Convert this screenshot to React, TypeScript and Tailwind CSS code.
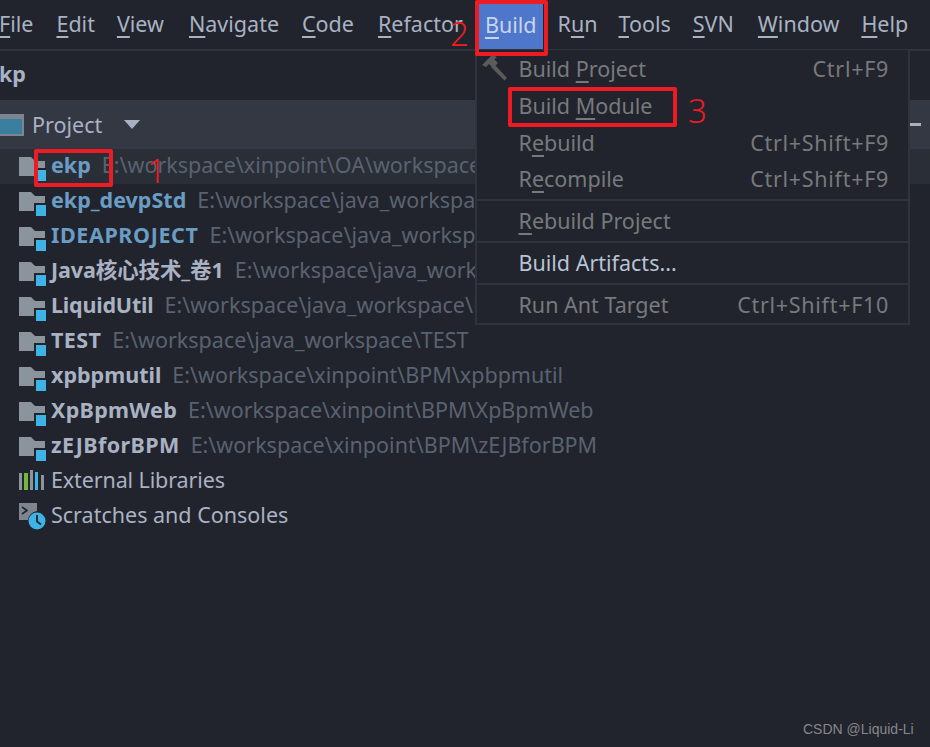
const font = "font-['Noto_Sans','Noto_Sans_CJK_SC',sans-serif]";

const menus = [
    { pre: "", key: "F", post: "ile", nudge: "" },
    { pre: "", key: "E", post: "dit", nudge: "" },
    { pre: "", key: "V", post: "iew", nudge: "-ml-[1px]" },
    { pre: "", key: "N", post: "avigate", nudge: "ml-[2px]" },
    { pre: "", key: "C", post: "ode", nudge: "" },
    { pre: "", key: "R", post: "efactor", nudge: "ml-[1px]" },
    { pre: "", key: "B", post: "uild", nudge: "", active: true },
    { pre: "R", key: "u", post: "n", nudge: "-ml-[2px]" },
    { pre: "", key: "T", post: "ools", nudge: "-ml-[2px]" },
    { pre: "", key: "S", post: "VN", nudge: "-ml-[1px]" },
    { pre: "", key: "W", post: "indow", nudge: "ml-[1px]" },
    { pre: "", key: "H", post: "elp", nudge: "-ml-[1px]" },
];

const modules = [
    { name: "ekp", path: "E:\\workspace\\xinpoint\\OA\\workspace\\ekp", blue: true, selected: true, track: "" },
    { name: "ekp_devpStd", path: "E:\\workspace\\java_workspace\\ekp_devpStd", blue: true, track: "" },
    { name: "IDEAPROJECT", path: "E:\\workspace\\java_workspace\\IDEAPROJECT", blue: true, track: "tracking-[0.6px]" },
    { name: "Java核心技术_卷1", path: "E:\\workspace\\java_workspace\\Java", track: "tracking-[-0.1px]" },
    { name: "LiquidUtil", path: "E:\\workspace\\java_workspace\\LiquidUtil", track: "tracking-[-0.2px]" },
    { name: "TEST", path: "E:\\workspace\\java_workspace\\TEST", track: "tracking-[0.4px]" },
    { name: "xpbpmutil", path: "E:\\workspace\\xinpoint\\BPM\\xpbpmutil", track: "" },
    { name: "XpBpmWeb", path: "E:\\workspace\\xinpoint\\BPM\\XpBpmWeb", track: "tracking-[0.3px]" },
    { name: "zEJBforBPM", path: "E:\\workspace\\xinpoint\\BPM\\zEJBforBPM", track: "tracking-[0.4px]" },
];

function FolderIcon() {
    return (
        <svg width="27" height="25" viewBox="0 0 27 25" className="shrink-0">
            <path d="M0 0h12l4 4h10v15H0z" fill="#8b939c" />
            <rect x="15" y="11" width="12" height="13" fill="#21242c" />
            <rect x="17" y="13" width="10" height="11" fill="#3db3e6" />
        </svg>
    );
}

function LibrariesIcon() {
    return (
        <svg width="27" height="25" viewBox="0 0 27 25" className="shrink-0">
            <rect x="0" y="4" width="3" height="17" fill="#8b939c" />
            <rect x="5" y="4" width="4" height="17" fill="#71b83c" />
            <rect x="11" y="1" width="3" height="20" fill="#8b939c" />
            <rect x="16" y="3" width="3" height="18" fill="#3db3e6" />
            <rect x="22" y="6" width="3" height="15" fill="#8b939c" />
        </svg>
    );
}

function ScratchIcon() {
    return (
        <svg width="27" height="27" viewBox="0 0 27 27" className="shrink-0">
            <path d="M0 0h18v8a10 10 0 0 0-9 9H0z" fill="#7d858e" />
            <path d="M3 4l5 3.5L3 11" fill="none" stroke="#21242c" strokeWidth="1.6" />
            <circle cx="18" cy="18" r="8.5" fill="#3db3e6" />
            <path d="M18 12v6.5l4 3" fill="none" stroke="#21242c" strokeWidth="1.8" />
        </svg>
    );
}

function HammerIcon() {
    return (
        <svg width="27" height="25" viewBox="0 0 27 25" className="absolute left-[5px] top-[6px]">
            <path d="M0 9L9 0h4l2 2-3 1 4 4-5 5-4-4-3 3z" fill="#5b5b5b" />
            <path d="M12 8l13 14-2.5 2.5L9 11z" fill="#5b5b5b" />
        </svg>
    );
}

function MenuRow({ pre, mark, post, shortcut, bright, short }: { pre?: string; mark?: string; post?: string; shortcut?: string; bright?: boolean; short?: boolean }) {
    return (
        <div className={`flex items-center justify-between pl-[41.5px] pr-[19px] ${short ? "h-[36px]" : "h-[37px]"} ${bright ? "text-[#b9c3d4]" : "text-[#777a7c]"}`}>
            <span>{pre}{mark && <span className="underline underline-offset-[4px] decoration-2">{mark}</span>}{post}</span>
            {shortcut && <span className="tracking-[0.7px]">{shortcut}</span>}
        </div>
    );
}

export default function App() {
    return (
        <div className={`relative w-[930px] h-[747px] overflow-hidden bg-[#21242c] text-[21.5px] leading-none ${font}`}>
            {/* Menu bar */}
            <div className="h-[51px] flex items-center gap-[23px] border-b-2 border-[#2f333c] text-[#a9b2c3] pb-[2px] -ml-[1px]">
                {menus.map((m) => (
                    <span key={m.key + m.post} className={m.active ? "self-start mt-[4px] h-[45px] pb-[3px] flex items-center -ml-[7px] -mr-[6px] px-[6px] bg-[#4e77cb] text-[#c9d4ea]" : m.nudge}>
                        <span>{m.pre}<span className="underline underline-offset-[4px] decoration-2">{m.key}</span>{m.post}</span>
                    </span>
                ))}
            </div>

            {/* Breadcrumb */}
            <div className="h-[49px] flex items-center -ml-[1px] pb-[3px] font-bold text-[#a9b2c3]">kp</div>

            {/* Tool window header */}
            <div className="h-[49px] flex items-center justify-between bg-[#343843] text-[#a9b2c3] pr-[9px]">
                <div className="flex items-center">
                    <svg width="24" height="22" viewBox="0 0 24 22" className="shrink-0">
                        <rect x="-2" y="1" width="25" height="20" fill="#3a7f9f" stroke="#7d858e" strokeWidth="2" />
                        <rect x="0" y="2" width="22" height="3" fill="#7d858e" />
                    </svg>
                    <span className="ml-[8px]">Project</span>
                    <svg width="16" height="9" viewBox="0 0 16 9" className="ml-[22px]">
                        <path d="M0 0h16L8 9z" fill="#a9b2c3" />
                    </svg>
                </div>
                <div className="w-[11px] h-[3px] bg-[#a9b2c3]" />
            </div>

            {/* Project tree */}
            <div>
                {modules.map((m) => (
                    <div key={m.name} className={`h-[35px] flex items-center pl-[19px] pb-[3px] gap-[5px] whitespace-nowrap ${m.selected ? "bg-[#2a2e37]" : ""}`}>
                        <div className="pt-[8px]"><FolderIcon /></div>
                        <span className={`font-bold ${m.track} ${m.blue ? "text-[#6a9cc4]" : "text-[#a9b2c3]"}`}>{m.name}</span>
                        <span className="ml-[6px] text-[#5a6270]">{m.path}</span>
                    </div>
                ))}
                <div className="h-[35px] flex items-center pl-[19px] pb-[3px] gap-[5px] text-[#a9b2c3]">
                    <div className="pt-[3px]"><LibrariesIcon /></div>
                    <span className="tracking-[-0.12px]">External Libraries</span>
                </div>
                <div className="h-[35px] flex items-center pl-[19px] pb-[3px] gap-[5px] text-[#a9b2c3]">
                    <div className="pt-[3px]"><ScratchIcon /></div>
                    <span>Scratches and Consoles</span>
                </div>
            </div>

            {/* Build dropdown */}
            <div className="absolute left-[475px] top-[50px] w-[435px] h-[275px] z-10 bg-[#21242c] border-2 border-t-0 border-[#2f333c]">
                <HammerIcon />
                <div className="border-b-2 border-[#2f333c] pb-[2px]">
                    <MenuRow pre="Build " mark="P" post="roject" shortcut="Ctrl+F9" />
                    <MenuRow pre="Build " mark="M" post="odule" />
                    <MenuRow pre="R" mark="e" post="build" shortcut="Ctrl+Shift+F9" />
                    <MenuRow pre="R" mark="e" post="compile" shortcut="Ctrl+Shift+F9" short />
                </div>
                <div className="border-b-2 border-[#2f333c] pt-[1px] pb-[2px]"><MenuRow mark="R" post="ebuild Project" /></div>
                <div className="border-b-2 border-[#2f333c] pt-[1px] pb-[2px]"><MenuRow pre="Build Artifacts..." bright /></div>
                <div className="pt-[1px]"><MenuRow pre="Run Ant Target" shortcut="Ctrl+Shift+F10" /></div>
            </div>

            {/* Screenshot annotations */}
            <div className="absolute left-[475px] top-0 w-[73px] h-[56px] z-40 border-4 border-[#ed1c24] rounded-[2px]" />
            <div className="absolute left-[34px] top-[149px] w-[79px] h-[38px] z-40 border-4 border-[#ed1c24] rounded-[2px]" />
            <div className="absolute left-[508px] top-[87px] w-[169px] h-[40px] z-40 border-4 border-[#ed1c24] rounded-[2px]" />
            <span className="absolute left-[147px] top-[154px] z-40 text-[33px] text-[#ed1c24] font-['Noto_Sans',sans-serif] font-light">1</span>
            <span className="absolute left-[450px] top-[17px] z-40 text-[33px] text-[#ed1c24] font-['Noto_Sans',sans-serif] font-light">2</span>
            <span className="absolute left-[688px] top-[94px] z-40 text-[33px] text-[#ed1c24] font-['Noto_Sans',sans-serif] font-light">3</span>
            <span className="absolute left-[803px] top-[722px] z-40 text-[14px] text-[#85878b] font-['Liberation_Sans',sans-serif]">CSDN @Liquid-Li</span>
        </div>
    );
}
